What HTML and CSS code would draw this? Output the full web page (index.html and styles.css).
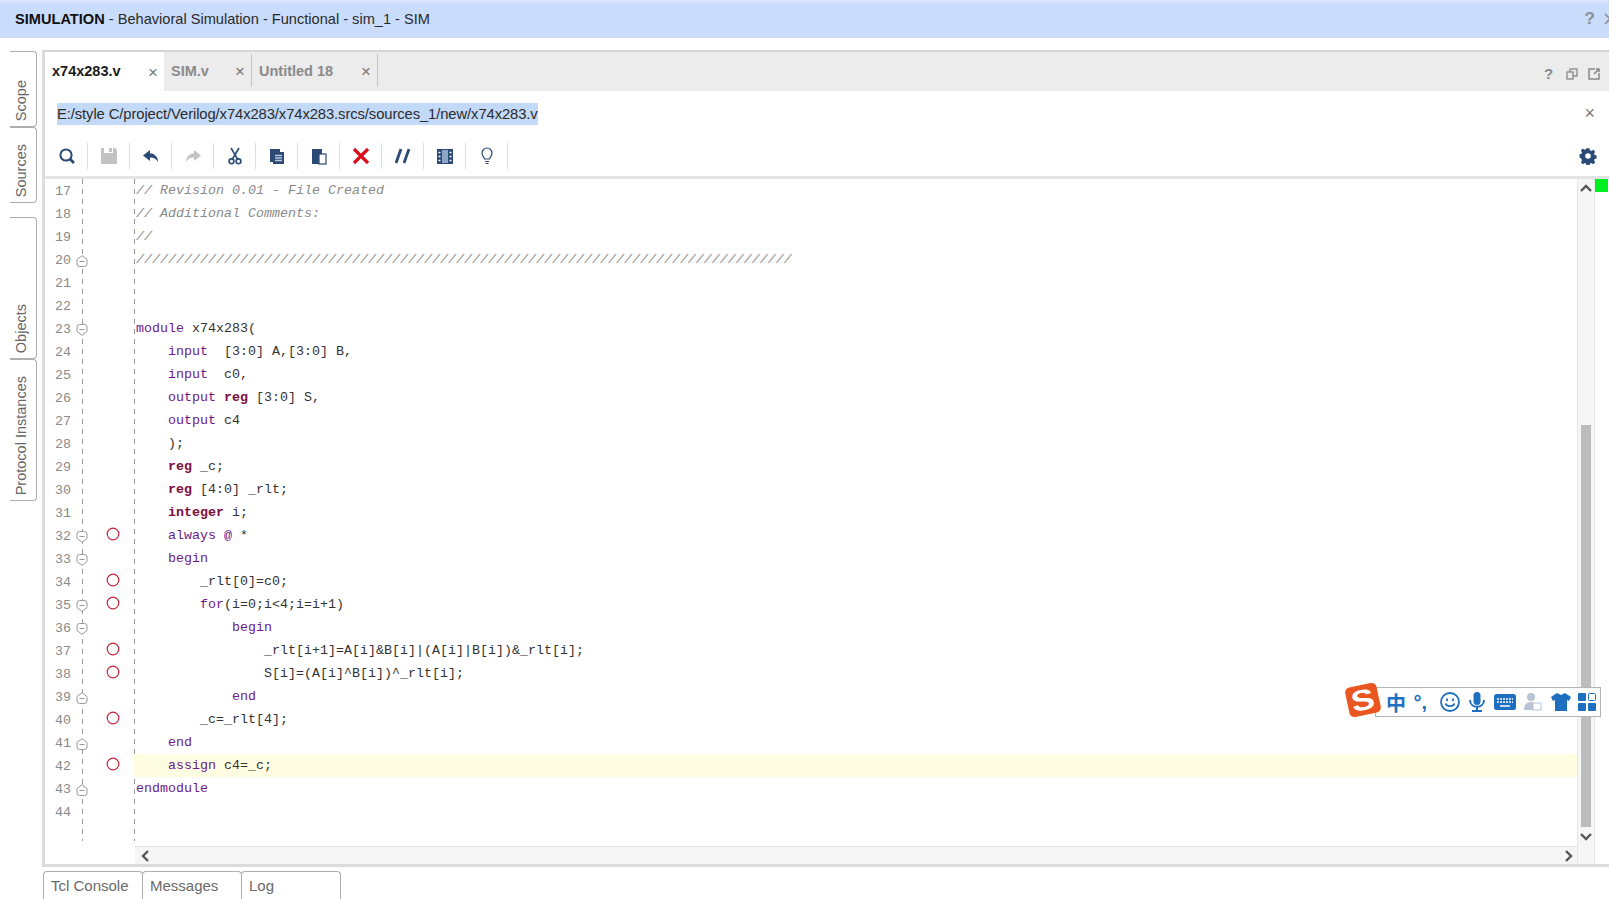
FILE: index.html
```html
<!DOCTYPE html>
<html lang="en">
<head>
<meta charset="utf-8">
<title>SIM</title>
<link rel="stylesheet" href="styles.css">
</head>
<body>
<header class="titlebar">
  <div class="title"><b>SIMULATION</b> - Behavioral Simulation - Functional - sim_1 - SIM</div>
  <div class="title-actions"><span class="q">?</span><svg class="x" width="12" height="12" viewBox="0 0 12 12" fill="none" stroke="#8b8f96" stroke-width="1.600"><path d="M1 1l10 10M11 1L1 11"/></svg></div>
</header>
<div class="main">
  <nav class="side">
    <div class="side-group">
      <div class="vtab short"><span>Scope</span></div>
      <div class="vtab short"><span>Sources</span></div>
    </div>
    <div class="side-group">
      <div class="vtab long"><span>Objects</span></div>
      <div class="vtab long"><span>Protocol Instances</span></div>
    </div>
  </nav>
  <section class="panel">
    <div class="tabbar">
      <div class="tab active t1"><span>x74x283.v</span><i>×</i></div>
      <div class="tab t2"><span>SIM.v</span><i>×</i></div>
      <div class="tab t3"><span>Untitled 18</span><i>×</i></div>
      <div class="tab-tools">
        <span class="help">?</span>
        <svg width="12" height="12" viewBox="0 0 12 12" fill="none" stroke="#888" stroke-width="1.3"><rect x="4" y="1" width="7" height="7"/><rect x="1" y="4" width="6" height="7" fill="#ececec"/></svg>
        <svg width="12" height="12" viewBox="0 0 12 12" fill="none" stroke="#888" stroke-width="1.5"><path d="M7 1H1v10h10V5"/><path d="M6 6l5-5M8 1h3v3"/></svg>
      </div>
    </div>
    <div class="pathrow">
      <span class="path">E:/style C/project/Verilog/x74x283/x74x283.srcs/sources_1/new/x74x283.v</span>
      <span class="path-close">×</span>
    </div>
    <div class="toolbar">
      <div class="tool"><svg width="18" height="18" viewBox="0 0 18 18" fill="none" stroke="#2b4a75" stroke-width="2"><circle cx="8" cy="8" r="5.6"/><path d="M12 12l4 4" stroke-width="2.8"/></svg></div>
      <div class="tool"><svg width="18" height="18" viewBox="0 0 18 18" fill="#c2c2c2"><path d="M1 1h3v5h9V1h2l2 2v14H1z"/><rect x="9" y="1" width="3" height="4"/></svg></div>
      <div class="tool"><svg width="18" height="14" viewBox="0 0 18 14" fill="#2b4a75"><path d="M8 1L1 6.5 8 12V8.6c4 0 6 1.4 8 4.4 0-5-3-8.400-8-8.800z"/></svg></div>
      <div class="tool"><svg width="18" height="14" viewBox="0 0 18 14" fill="#c4c4c4"><path d="M10 1l7 5.500L10 12V8.600c-4 0-6 1.400-8 4.400 0-5 3-8.400 8-8.800z"/></svg></div>
      <div class="tool"><svg width="14" height="18" viewBox="0 0 14 18" fill="none" stroke="#2b4a75" stroke-width="1.600"><path d="M3 1l6.500 11M11 1L4.500 12"/><circle cx="3.500" cy="14.300" r="2.400"/><circle cx="10.500" cy="14.300" r="2.400"/></svg></div>
      <div class="tool"><svg width="16" height="17" viewBox="0 0 16 17"><path d="M1 1h10v3H4v10H1z" fill="#2b4a75"/><rect x="4" y="4" width="11" height="12" fill="#2b4a75"/><path d="M6 7.500h7M6 10h7M6 12.500h7" stroke="#b9c6dc" stroke-width="1.400"/></svg></div>
      <div class="tool"><svg width="16" height="17" viewBox="0 0 16 17"><rect x="1" y="1" width="10" height="15" fill="#2b4a75"/><rect x="8" y="6" width="7" height="10" fill="#fff" stroke="#2b4a75" stroke-width="1.200"/></svg></div>
      <div class="tool"><svg width="18" height="18" viewBox="0 0 18 18" stroke="#d8101c" stroke-width="3.200" fill="none"><path d="M2 2l14 14M16 2L2 16"/></svg></div>
      <div class="tool"><svg width="17" height="16" viewBox="0 0 17 16" stroke="#2b4a75" stroke-width="2.800" fill="none"><path d="M7 1L2 15M15 1l-5 14"/></svg></div>
      <div class="tool"><svg width="16" height="15" viewBox="0 0 16 15"><rect width="16" height="15" fill="#2b4a75"/><rect x="5" y="1" width="6" height="13" fill="#8ea4c8"/><path d="M1.500 3.500h2M1.500 7.500h2M1.500 11.500h2M12.500 3.500h2M12.500 7.500h2M12.500 11.500h2" stroke="#fff" stroke-width="1.500"/></svg></div>
      <div class="tool"><svg width="14" height="18" viewBox="0 0 14 18" fill="none" stroke="#2b4a75" stroke-width="1.200"><path d="M4.500 12C4 10 2 9 2 6a5 5 0 0 1 10 0c0 3-2 4-2.500 6z"/><path d="M5 14.500h4M5.500 16.500h3"/></svg></div>
      <svg class="gear" width="18" height="18" viewBox="0 0 18 18" fill="#2b4a75"><path d="M7.500 1h3l.5 2.200 1.500.7 2-1.200 2 2.100-1.200 2 .6 1.500 2.100.5v3l-2.100.5-.6 1.500 1.200 2-2 2.100-2-1.200-1.500.7-.5 2.100h-3l-.5-2.100-1.500-.7-2 1.200-2-2.100 1.200-2-.6-1.500L0 10.500v-3l2.100-.5.6-1.500-1.200-2 2-2.100 2 1.200 1.500-.7z" transform="translate(.5 .2) scale(.95)"/><circle cx="9" cy="9" r="2.800" fill="#fff"/></svg>
    </div>
    <div class="editor">
      <div class="codearea">
        <div class="lines">
          <div class="row"><span class="num">17</span><span class="fold"></span><span class="bp"></span><code class="c">// Revision 0.01 - File Created</code></div>
          <div class="row"><span class="num">18</span><span class="fold"></span><span class="bp"></span><code class="c">// Additional Comments:</code></div>
          <div class="row"><span class="num">19</span><span class="fold"></span><span class="bp"></span><code class="c">//</code></div>
          <div class="row"><span class="num">20</span><span class="fold"><svg width="12" height="12" viewBox="0 0 12 12" fill="#fff" stroke="#999"><path d="M1 4.500L6 .7l5 3.800V9a2.500 2.500 0 0 1-2.500 2.500h-5A2.500 2.500 0 0 1 1 9z"/><path d="M3.500 6.500h5"/></svg></span><span class="bp"></span><code class="c">//////////////////////////////////////////////////////////////////////////////////</code></div>
          <div class="row"><span class="num">21</span><span class="fold"></span><span class="bp"></span><code></code></div>
          <div class="row"><span class="num">22</span><span class="fold"></span><span class="bp"></span><code></code></div>
          <div class="row"><span class="num">23</span><span class="fold"><svg width="12" height="12" viewBox="0 0 12 12" fill="#fff" stroke="#999"><path d="M1 7.500l5 3.800 5-3.800V3A2.500 2.500 0 0 0 8.500.5h-5A2.500 2.500 0 0 0 1 3z"/><path d="M3.500 5.500h5"/></svg></span><span class="bp"></span><code><b class="k">module</b> x74x283(</code></div>
          <div class="row"><span class="num">24</span><span class="fold"></span><span class="bp"></span><code>    <b class="k">input</b>  [3:0] A,[3:0] B,</code></div>
          <div class="row"><span class="num">25</span><span class="fold"></span><span class="bp"></span><code>    <b class="k">input</b>  c0,</code></div>
          <div class="row"><span class="num">26</span><span class="fold"></span><span class="bp"></span><code>    <b class="k">output</b> <b class="r">reg</b> [3:0] S,</code></div>
          <div class="row"><span class="num">27</span><span class="fold"></span><span class="bp"></span><code>    <b class="k">output</b> c4</code></div>
          <div class="row"><span class="num">28</span><span class="fold"></span><span class="bp"></span><code>    );</code></div>
          <div class="row"><span class="num">29</span><span class="fold"></span><span class="bp"></span><code>    <b class="r">reg</b> _c;</code></div>
          <div class="row"><span class="num">30</span><span class="fold"></span><span class="bp"></span><code>    <b class="r">reg</b> [4:0] _rlt;</code></div>
          <div class="row"><span class="num">31</span><span class="fold"></span><span class="bp"></span><code>    <b class="r">integer</b> i;</code></div>
          <div class="row"><span class="num">32</span><span class="fold"><svg width="12" height="12" viewBox="0 0 12 12" fill="#fff" stroke="#999"><path d="M1 7.500l5 3.800 5-3.800V3A2.500 2.500 0 0 0 8.500.5h-5A2.500 2.500 0 0 0 1 3z"/><path d="M3.500 5.500h5"/></svg></span><span class="bp"><svg width="14" height="14" viewBox="0 0 14 14" fill="#fff" stroke="#c2243a" stroke-width="1.200"><circle cx="7" cy="7" r="5.800"/></svg></span><code>    <b class="k">always @</b> *</code></div>
          <div class="row"><span class="num">33</span><span class="fold"><svg width="12" height="12" viewBox="0 0 12 12" fill="#fff" stroke="#999"><path d="M1 7.500l5 3.800 5-3.800V3A2.500 2.500 0 0 0 8.500.5h-5A2.500 2.500 0 0 0 1 3z"/><path d="M3.500 5.500h5"/></svg></span><span class="bp"></span><code>    <b class="k">begin</b></code></div>
          <div class="row"><span class="num">34</span><span class="fold"></span><span class="bp"><svg width="14" height="14" viewBox="0 0 14 14" fill="#fff" stroke="#c2243a" stroke-width="1.200"><circle cx="7" cy="7" r="5.800"/></svg></span><code>        _rlt[0]=c0;</code></div>
          <div class="row"><span class="num">35</span><span class="fold"><svg width="12" height="12" viewBox="0 0 12 12" fill="#fff" stroke="#999"><path d="M1 7.500l5 3.800 5-3.800V3A2.500 2.500 0 0 0 8.500.5h-5A2.500 2.500 0 0 0 1 3z"/><path d="M3.500 5.500h5"/></svg></span><span class="bp"><svg width="14" height="14" viewBox="0 0 14 14" fill="#fff" stroke="#c2243a" stroke-width="1.200"><circle cx="7" cy="7" r="5.800"/></svg></span><code>        <b class="k">for</b>(i=0;i&lt;4;i=i+1)</code></div>
          <div class="row"><span class="num">36</span><span class="fold"><svg width="12" height="12" viewBox="0 0 12 12" fill="#fff" stroke="#999"><path d="M1 7.500l5 3.800 5-3.800V3A2.500 2.500 0 0 0 8.500.5h-5A2.500 2.500 0 0 0 1 3z"/><path d="M3.500 5.500h5"/></svg></span><span class="bp"></span><code>            <b class="k">begin</b></code></div>
          <div class="row"><span class="num">37</span><span class="fold"></span><span class="bp"><svg width="14" height="14" viewBox="0 0 14 14" fill="#fff" stroke="#c2243a" stroke-width="1.200"><circle cx="7" cy="7" r="5.800"/></svg></span><code>                _rlt[i+1]=A[i]&amp;B[i]|(A[i]|B[i])&amp;_rlt[i];</code></div>
          <div class="row"><span class="num">38</span><span class="fold"></span><span class="bp"><svg width="14" height="14" viewBox="0 0 14 14" fill="#fff" stroke="#c2243a" stroke-width="1.200"><circle cx="7" cy="7" r="5.800"/></svg></span><code>                S[i]=(A[i]^B[i])^_rlt[i];</code></div>
          <div class="row"><span class="num">39</span><span class="fold"><svg width="12" height="12" viewBox="0 0 12 12" fill="#fff" stroke="#999"><path d="M1 4.500L6 .7l5 3.800V9a2.500 2.500 0 0 1-2.500 2.500h-5A2.500 2.500 0 0 1 1 9z"/><path d="M3.500 6.500h5"/></svg></span><span class="bp"></span><code>            <b class="k">end</b></code></div>
          <div class="row"><span class="num">40</span><span class="fold"></span><span class="bp"><svg width="14" height="14" viewBox="0 0 14 14" fill="#fff" stroke="#c2243a" stroke-width="1.200"><circle cx="7" cy="7" r="5.800"/></svg></span><code>        _c=_rlt[4];</code></div>
          <div class="row"><span class="num">41</span><span class="fold"><svg width="12" height="12" viewBox="0 0 12 12" fill="#fff" stroke="#999"><path d="M1 4.500L6 .7l5 3.800V9a2.500 2.500 0 0 1-2.500 2.500h-5A2.500 2.500 0 0 1 1 9z"/><path d="M3.500 6.500h5"/></svg></span><span class="bp"></span><code>    <b class="k">end</b></code></div>
          <div class="row current"><span class="num">42</span><span class="fold"></span><span class="bp"><svg width="14" height="14" viewBox="0 0 14 14" fill="#fff" stroke="#c2243a" stroke-width="1.200"><circle cx="7" cy="7" r="5.800"/></svg></span><code>    <b class="k">assign</b> c4=_c;</code></div>
          <div class="row"><span class="num">43</span><span class="fold"><svg width="12" height="12" viewBox="0 0 12 12" fill="#fff" stroke="#999"><path d="M1 4.500L6 .7l5 3.800V9a2.500 2.500 0 0 1-2.500 2.500h-5A2.500 2.500 0 0 1 1 9z"/><path d="M3.500 6.500h5"/></svg></span><span class="bp"></span><code><b class="k">endmodule</b></code></div>
          <div class="row"><span class="num">44</span><span class="fold"></span><span class="bp"></span><code></code></div>
        </div>
        <div class="hscroll">
          <svg width="10" height="14" viewBox="0 0 10 14" fill="none" stroke="#555" stroke-width="2.400"><path d="M8 2L3 7l5 5"/></svg>
          <svg width="10" height="14" viewBox="0 0 10 14" fill="none" stroke="#555" stroke-width="2.400"><path d="M2 2l5 5-5 5"/></svg>
        </div>
      </div>
      <div class="vscroll">
        <svg width="14" height="10" viewBox="0 0 14 10" fill="none" stroke="#555" stroke-width="2.400"><path d="M2 8l5-5 5 5"/></svg>
        <div class="track"><div class="thumb"></div></div>
        <svg width="14" height="10" viewBox="0 0 14 10" fill="none" stroke="#555" stroke-width="2.400"><path d="M2 2l5 5 5-5"/></svg>
      </div>
      <div class="marks"><div class="green"></div></div>
    </div>
  </section>
</div>
<footer class="bottomtabs">
  <div class="btab">Tcl Console</div>
  <div class="btab">Messages</div>
  <div class="btab">Log</div>
</footer>
<aside class="ime">
  <div class="ime-logo"><span>S</span></div>
  <div class="ime-bar">
    <span class="ime-zh">中</span>
    <span class="ime-p">°,</span>
    <svg width="22" height="22" viewBox="0 0 22 22" fill="none" stroke="#1f6fc0" stroke-width="1.800"><circle cx="11" cy="11" r="9"/><path d="M6.500 12.500c1.500 3.500 7.500 3.500 9 0"/><path d="M8 7.500v2.500M14 7.500v2.500"/></svg>
    <svg width="18" height="22" viewBox="0 0 18 22" fill="#1f6fc0"><rect x="5.500" y="1" width="7" height="13" rx="3.500"/><path d="M2 9c0 9 14 9 14 0" fill="none" stroke="#1f6fc0" stroke-width="2"/><path d="M8 16h2v3h4v2H4v-2h4z"/></svg>
    <svg width="22" height="16" viewBox="0 0 22 16"><rect width="22" height="16" rx="2.500" fill="#1f6fc0"/><path d="M3 5h16M3 8h16" stroke="#fff" stroke-width="1.500" stroke-dasharray="2 1"/><path d="M6 12h10" stroke="#fff" stroke-width="1.500"/></svg>
    <svg width="20" height="20" viewBox="0 0 20 20"><circle cx="8" cy="5" r="4" fill="#b8c4d4"/><path d="M1 18c0-6 3-8 7-8 2 0 3 .5 4 1v7z" fill="#b8c4d4"/><rect x="10" y="11" width="8" height="7" fill="#fff" stroke="#b8c4d4"/></svg>
    <svg width="20" height="20" viewBox="0 0 20 20" fill="#1f6fc0"><path d="M6 1l4 2 4-2 6 4-2 4-2-1v11H4V8L2 9 0 5z"/></svg>
    <svg width="18" height="18" viewBox="0 0 18 18" fill="#1f6fc0"><rect width="8" height="8" rx="1"/><rect x="10.500" y=".5" width="7" height="7" rx="1" fill="#fff" stroke="#1f6fc0"/><rect y="10" width="8" height="8" rx="1"/><rect x="10" y="10" width="8" height="8" rx="1"/></svg>
  </div>
</aside>
</body>
</html>
```
FILE: styles.css
```css
html, body { margin: 0; padding: 0; }
body {
  width: 1609px;
  height: 899px;
  overflow: hidden;
  background: #fff;
  font-family: "Liberation Sans", Arial, sans-serif;
  color: #222;
  display: flex;
  flex-direction: column;
  position: relative;
}
.titlebar {
  height: 38px;
  flex: none;
  box-sizing: border-box;
  background: #c9dcfb;
  border-top: 3px solid #d5e3fb;
  display: flex;
  align-items: center;
  justify-content: space-between;
  padding: 0 0 4px 15px;
  overflow: hidden;
}
.title { font-size: 14.600px; color: #2a2a2a; }
.title b { color: #111; }
.title-actions { display: flex; gap: 9px; align-items: center; margin-right: -7px; color: #8b8f96; font-weight: bold; }
.title-actions .q { font-size: 17px; }
.title-actions .x { display: block; }

.main { flex: 1; display: flex; min-height: 0; padding-top: 12px; }
.side { width: 42px; flex: none; box-sizing: border-box; padding: 1px 0 0 10px; display: flex; flex-direction: column; gap: 14px; }
.side-group { display: flex; flex-direction: column; }
.vtab {
  width: 27px;
  box-sizing: border-box;
  border: 1px solid #aeaeae;
  border-left: 0;
  border-radius: 0 4px 4px 0;
  display: flex;
  align-items: flex-end;
  justify-content: center;
  color: #666;
  font-size: 14.500px;
  padding: 0 4px 5px 0;
}
.vtab span { writing-mode: vertical-rl; transform: rotate(180deg); }
.vtab.short { height: 76px; }
.vtab.long { height: 142px; }

.panel {
  flex: 1;
  min-width: 0;
  display: flex;
  flex-direction: column;
  border-top: 2px solid #d6d6d6;
  border-left: 3px solid #dcdcdc;
  border-bottom: 3px solid #dcdcdc;
}
.tabbar { height: 39px; flex: none; background: #ececec; display: flex; align-items: stretch; }
.tab {
  box-sizing: border-box;
  display: flex;
  align-items: center;
  font-size: 14.500px;
  font-weight: bold;
  color: #8a8a8a;
  border-right: 1px solid #c4c4c4;
  margin: 2px 0 4px;
  position: relative;
  padding-left: 0;
}
.tab span { flex: 1; padding: 1px 0 0 7px; }
.tab.active span { padding-top: 0; padding-bottom: 1px; }
.tab i { font-style: normal; font-weight: normal; font-size: 17px; color: #777; padding: 3px 6px 0 0; }
.tab.active { background: #fff; color: #1b1b1b; border: 0; margin: 0; }
.t1 { width: 119px; }
.t2 { width: 88px; }
.t3 { width: 126px; }
.t3 span { padding-left: 7px; }
.tab-tools { margin-left: auto; display: flex; align-items: center; gap: 10px; padding: 4px 9px 0 0; color: #888; }
.tab-tools .help { font-weight: bold; font-size: 15px; width: 12px; }

.pathrow { height: 47px; flex: none; display: flex; align-items: center; justify-content: space-between; padding: 0 14px 2px 12px; box-sizing: border-box; }
.path { background: #c3d9f8; color: #2c2c2c; font-size: 14.800px; line-height: 22px; letter-spacing: -0.1px; }
.path-close { font-size: 18px; color: #777; }

.toolbar { height: 41px; flex: none; box-sizing: border-box; display: flex; align-items: center; border-bottom: 3px solid #e4e4e4; padding-left: 1px; padding-bottom: 2px; }
.tool { width: 42px; height: 26px; box-sizing: border-box; border-right: 1px solid #dedede; display: flex; align-items: center; justify-content: center; }
.tool svg { display: block; }
.gear { margin-left: auto; margin-right: 12px; }

.editor { flex: 1; min-height: 0; display: flex; }
.codearea { flex: 1; min-width: 0; display: flex; flex-direction: column; }
.lines {
  flex: 1;
  min-height: 0;
  background-image:
    repeating-linear-gradient(to bottom, #999 0 5px, transparent 5px 10px),
    repeating-linear-gradient(to bottom, #999 0 5px, transparent 5px 10px);
  background-size: 1px calc(100% - 5px), 1px calc(100% - 5px);
  background-position: 37px 0, 89px 0;
  background-repeat: no-repeat;
}
.row { height: 23px; display: flex; align-items: center; }
.row.current code { background: #fffde1; }
.num { width: 26px; flex: none; box-sizing: border-box; text-align: right; font: 13.330px/23px "Liberation Mono", monospace; color: #8a8a8a; padding-top: 2px; }
.fold { width: 20px; flex: none; height: 23px; display: flex; align-items: center; justify-content: center; padding: 2px 0 0 1px; box-sizing: border-box; }
.fold svg { display: block; }
.bp { width: 43px; flex: none; height: 23px; display: flex; align-items: center; justify-content: center; }
.bp svg { display: block; margin-bottom: 3px; }
code {
  flex: 1;
  height: 23px;
  box-sizing: border-box;
  padding-left: 2px;
  font: 13.330px/23px "Liberation Mono", monospace;
  white-space: pre;
  color: #333;
}
code.c { font-style: italic; color: #8a8a8a; }
.k { font-weight: normal; color: #6a1a8c; }
.r { font-weight: bold; color: #7a1040; }

.hscroll { height: 18px; flex: none; margin-left: 90px; background: #f6f6f6; border-top: 1px solid #e6e6e6; box-sizing: border-box; display: flex; align-items: center; justify-content: space-between; padding: 0 3px 0 5px; }
.hscroll svg, .vscroll svg { display: block; flex: none; }

.vscroll { width: 18px; flex: none; box-sizing: border-box; background: #f6f6f6; border-left: 1px solid #e6e6e6; border-right: 1px solid #e6e6e6; display: flex; flex-direction: column; align-items: center; padding: 4px 0 22px; }
.track { flex: 1; width: 100%; display: flex; flex-direction: column; justify-content: flex-end; padding-bottom: 5px; }
.thumb { height: 402px; width: 10px; background: #bcbcbc; margin: 0 auto; }
.marks { width: 14px; flex: none; }
.green { width: 13px; height: 13px; background: #00ee22; }

.bottomtabs { height: 32px; flex: none; box-sizing: border-box; display: flex; padding: 4px 0 0 43px; }
.btab { width: 100px; height: 28px; box-sizing: border-box; border: 1px solid #aeaeae; border-bottom: 0; border-radius: 4px 4px 0 0; margin-right: -1px; font-size: 15px; color: #6a6a6a; padding: 5px 0 0 7px; }

.ime { position: absolute; left: 1345px; top: 684px; width: 256px; height: 35px; }
.ime-bar { position: absolute; left: 30px; top: 3px; width: 226px; height: 30px; box-sizing: border-box; background: #fff; border: 1px solid #b5b5b5; display: flex; align-items: center; justify-content: space-between; padding: 0 4px 0 10px; }
.ime-logo { position: absolute; left: 2px; top: 1px; width: 32px; height: 30px; background: #e9561f; border-radius: 5px; transform: rotate(-12deg); display: flex; align-items: center; justify-content: center; z-index: 1; }
.ime-logo span { color: #fff; font-weight: bold; font-size: 29px; line-height: 30px; transform: scaleX(1.200); }
.ime-zh { color: #1f6fc0; font: bold 20px "Noto Sans CJK SC", sans-serif; }
.ime-p { color: #1f6fc0; font-weight: bold; font-size: 20px; line-height: 20px; width: 18px; }
```
